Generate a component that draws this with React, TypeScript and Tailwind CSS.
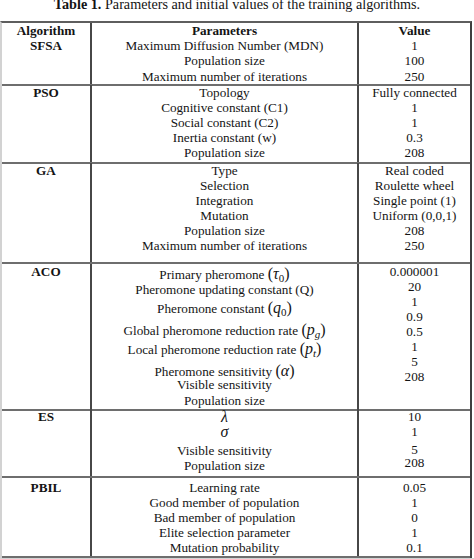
type Line = { t: React.ReactNode; cls?: string };

function M({ v, sub, italicSub }: { v: string; sub?: string; italicSub?: boolean }) {
  return (
    <span className="text-[16px] leading-none">
      (<i>{v}</i>
      {sub && (
        <span className={`relative top-[3px] text-[11px] ${italicSub ? "italic" : ""}`}>{sub}</span>
      )}
      )
    </span>
  );
}

function Group({
  name,
  params,
  values,
  h,
  nameCls,
  paramCls,
  valueCls,
  lh,
}: {
  name: string;
  params: Line[];
  values: Line[];
  h: string;
  nameCls: string;
  paramCls: string;
  valueCls: string;
  lh: string;
}) {
  return (
    <div className={`grid grid-cols-[90px_267px_111px] border-b-2 border-[#6e6e6e] ${h}`}>
      <div className={`border-r-2 border-[#474747] text-center font-bold ${nameCls}`}>
        <div className={lh}>{name}</div>
      </div>
      <div className={`border-r-2 border-[#474747] text-center ${paramCls}`}>
        {params.map((p, i) => (
          <div key={i} className={`${lh} whitespace-nowrap ${p.cls ?? ""}`}>
            {p.t}
          </div>
        ))}
      </div>
      <div className={`text-center ${valueCls}`}>
        {values.map((v, i) => (
          <div key={i} className={`${lh} whitespace-nowrap ${v.cls ?? ""}`}>
            {v.t}
          </div>
        ))}
      </div>
    </div>
  );
}

const L = (arr: string[]): Line[] => arr.map((t) => ({ t }));

export default function App() {
  return (
    <div className="w-[474px] h-[559px] overflow-hidden bg-white text-[#141414] font-['Liberation_Serif',serif] text-[13.2px]">
      <div className="h-[25px] -mt-[4px] text-center text-[14.2px] leading-[16px] whitespace-nowrap">
        <b>Table 1.</b> Parameters and initial values of the training algorithms.
      </div>

      <div className="w-[472px] border-t-2 border-r-2 border-l-2 border-t-[#5e5e5e] border-r-[#3f3f3f] border-l-[#d2d2d2]">
        {/* header */}
        <div className="grid grid-cols-[90px_267px_111px] h-[15px] font-bold">
          <div className="border-r-2 border-[#474747] text-center leading-[15px]">Algorithm</div>
          <div className="border-r-2 border-[#474747] text-center leading-[15px]">Parameters</div>
          <div className="text-center leading-[15px]">Value</div>
        </div>

        <Group
          name="SFSA"
          h="h-[48px]"
          lh="h-[15.3px] leading-[15.3px]"
          nameCls=""
          paramCls=""
          valueCls=""
          params={L(["Maximum Diffusion Number (MDN)", "Population size", "Maximum number of iterations"])}
          values={L(["1", "100", "250"])}
        />

        <Group
          name="PSO"
          h="h-[78px]"
          lh="h-[15px] leading-[15px]"
          nameCls="-mt-px"
          paramCls="-mt-px"
          valueCls="-mt-px"
          params={L([
            "Topology",
            "Cognitive constant (C1)",
            "Social constant (C2)",
            "Inertia constant (w)",
            "Population size",
          ])}
          values={L(["Fully connected", "1", "1", "0.3", "208"])}
        />

        <Group
          name="GA"
          h="h-[100px]"
          lh="h-[15px] leading-[15px]"
          nameCls="-mt-px"
          paramCls="-mt-px"
          valueCls="-mt-px"
          params={L([
            "Type",
            "Selection",
            "Integration",
            "Mutation",
            "Population size",
            "Maximum number of iterations",
          ])}
          values={L(["Real coded", "Roulette wheel", "Single point (1)", "Uniform (0,0,1)", "208", "250"])}
        />

        <Group
          name="ACO"
          h="h-[147px]"
          lh="h-[15.1px] leading-[15.1px]"
          nameCls="-mt-[0.5px]"
          paramCls="pt-[2.3px]"
          valueCls="-mt-[0.5px]"
          params={[
            { t: <>Primary pheromone <M v="τ" sub="0" /></> },
            { t: "Pheromone updating constant (Q)", cls: "mt-[1px]" },
            { t: <>Pheromone constant <M v="q" sub="0" /></>, cls: "mt-[3px]" },
            { t: <>Global pheromone reduction rate <M v="p" sub="g" italicSub /></>, cls: "mt-[6px]" },
            { t: <>Local pheromone reduction rate <M v="p" sub="t" italicSub /></>, cls: "mt-[4px]" },
            { t: <>Pheromone sensitivity <M v="α" /></>, cls: "mt-[7px]" },
            { t: "Visible sensitivity", cls: "-mt-px" },
            { t: "Population size", cls: "mt-[1px]" },
          ]}
          values={L(["0.000001", "20", "1", "0.9", "0.5", "1", "5", "208"])}
        />

        <Group
          name="ES"
          h="h-[67px]"
          lh="h-[15px] leading-[15px]"
          nameCls="-mt-[1.7px]"
          paramCls="-mt-[1.7px]"
          valueCls="-mt-[1.7px]"
          params={[
            { t: <i className="text-[16px]">λ</i> },
            { t: <i className="text-[16px]">σ</i> },
            { t: "Visible sensitivity", cls: "mt-[4px]" },
            { t: "Population size" },
          ]}
          values={[
            { t: "10" },
            { t: "1" },
            { t: "5", cls: "mt-[3px]" },
            { t: "208", cls: "-mt-[2px]" },
          ]}
        />

        <Group
          name="PBIL"
          h="h-[80px]"
          lh="h-[15.2px] leading-[15.2px]"
          nameCls="pt-[1.5px]"
          paramCls="pt-[1.5px]"
          valueCls="pt-[1.5px]"
          params={L([
            "Learning rate",
            "Good member of population",
            "Bad member of population",
            "Elite selection parameter",
            "Mutation probability",
          ])}
          values={L(["0.05", "1", "0", "1", "0.1"])}
        />
      </div>
      <div className="h-[2px] bg-[#d4d4d4]" />
    </div>
  );
}
